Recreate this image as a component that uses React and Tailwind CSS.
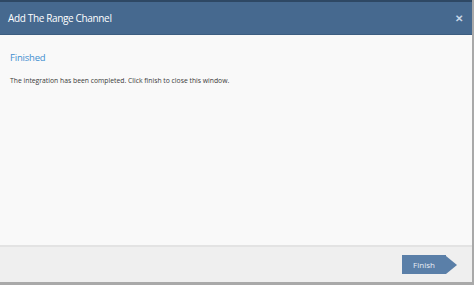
export default function App() {
  return (
    <div className="w-[474px] h-[285px] bg-[#a9a9a9] flex flex-col" style={{ fontFamily: '"Open Sans", "Noto Sans", sans-serif' }}>
      <div className="flex-1 flex flex-col mr-[2px] mb-[3px] bg-[#f9f9f9]">
        <div className="h-[2px] bg-[#2e4864]" />
        <div className="h-[33px] bg-[#46698f] border-b border-[#3c5d80] flex items-center justify-between pl-[8px] pr-[9px]">
          <span className="text-[10px] tracking-[-0.35px] text-white leading-none">Add The Range Channel</span>
          <span className="text-[#c7d6e6] text-[10px] font-bold leading-none">✕</span>
        </div>
        <div className="flex-1 pl-[10px] pt-[18px]">
          <div className="text-[9.5px] tracking-[-0.2px] text-[#3f8fd0] leading-none">Finished</div>
          <div className="text-[6.8px] text-[#3a3a3a] leading-none mt-[15px]">The integration has been completed. Click finish to close this window.</div>
        </div>
        <div className="h-[37px] bg-[#efefef] border-t-2 border-[#e3e3e3] flex items-center justify-end pr-[15px]">
          <div className="flex items-center h-[19px]">
            <div className="h-full w-[44px] bg-[#5a7fa8] flex items-center justify-center text-[8px] text-[#e8eef5]">Finish</div>
            <div className="w-0 h-0 border-y-[9.5px] border-y-transparent border-l-[11px] border-l-[#5a7fa8]" />
          </div>
        </div>
      </div>
    </div>
  );
}
